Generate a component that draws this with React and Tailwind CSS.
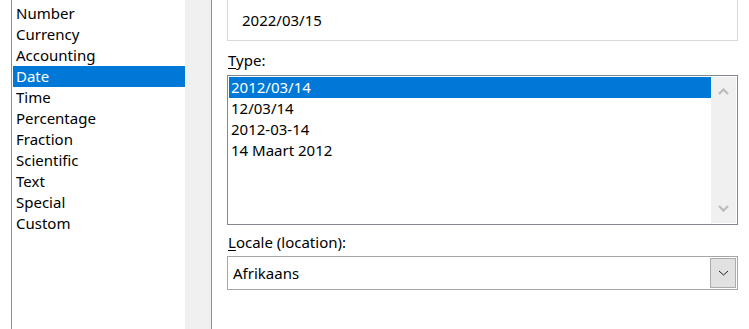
import React from 'react';

const categories = ['Number', 'Currency', 'Accounting', 'Date', 'Time', 'Percentage', 'Fraction', 'Scientific', 'Text', 'Special', 'Custom'];
const types = ['2012/03/14', '12/03/14', '2012-03-14', '14 Maart 2012'];

const Chevron = ({ up, className }) => (
  <svg width="11" height="7" viewBox="0 0 11 7" className={className}>
    <path
      d={up ? 'M1 6 L5.5 1.5 L10 6' : 'M1 1 L5.5 5.5 L10 1'}
      fill="none"
      stroke="currentColor"
      strokeWidth="2.4"
    />
  </svg>
);

const App = () => {
  return (
    <div
      className="w-[749px] h-[329px] bg-white flex overflow-hidden text-[15px] text-black"
      style={{ fontFamily: '"Noto Sans", "Open Sans", sans-serif' }}
    >
      {/* category list */}
      <div className="ml-[11px] w-[201px] h-full flex border-l border-r border-[#8f8f8f]">
        <div className="flex-1 pt-[3px] pl-[1px]">
          {categories.map(c => (
            <div
              key={c}
              className={`h-[21px] leading-[21px] pl-[3px] ${c === 'Date' ? 'bg-[#0078d7] text-white' : ''}`}
            >
              {c}
            </div>
          ))}
        </div>
        <div className="w-[26px] h-full bg-[#f0f0f0]" />
      </div>

      {/* right pane */}
      <div className="ml-[15px] w-[511px] flex flex-col">
        <div className="h-[41px] border border-t-0 border-[#d9d9d9] flex items-center pl-[14px] pt-[1px]">
          2022/03/15
        </div>

        <div className="mt-[9px] h-[20px] leading-[20px] pl-[1px]">
          <span className="underline underline-offset-2">T</span>ype:
        </div>

        <div className="mt-[5px] h-[150px] border border-[#828790] p-[1px] flex">
          <div className="flex-1">
            {types.map((t, i) => (
              <div
                key={t}
                className={`h-[21px] leading-[20px] pl-[2px] ${i === 0 ? 'bg-[#0078d7] text-white' : ''}`}
              >
                {t}
              </div>
            ))}
          </div>
          <div className="w-[25px] bg-[#f0f0f0] flex flex-col items-center justify-between py-[11px] text-[#bdbdbd]">
            <Chevron up />
            <Chevron />
          </div>
        </div>

        <div className="mt-[7px] h-[20px] leading-[20px] pl-[1px]">
          <span className="underline underline-offset-2">L</span>ocale (location):
        </div>

        <div className="mt-[4px] h-[34px] border border-[#a6a6a6] flex items-center p-[1px]">
          <div className="flex-1 pl-[4px]">Afrikaans</div>
          <div className="w-[26px] h-full bg-[#e1e1e1] border border-[#adadad] flex items-center justify-center text-[#222]">
            <svg width="11" height="6" viewBox="0 0 11 6">
              <path d="M1 1 L5.5 5 L10 1" fill="none" stroke="currentColor" strokeWidth="1" />
            </svg>
          </div>
        </div>
      </div>
    </div>
  );
};

export default App;
